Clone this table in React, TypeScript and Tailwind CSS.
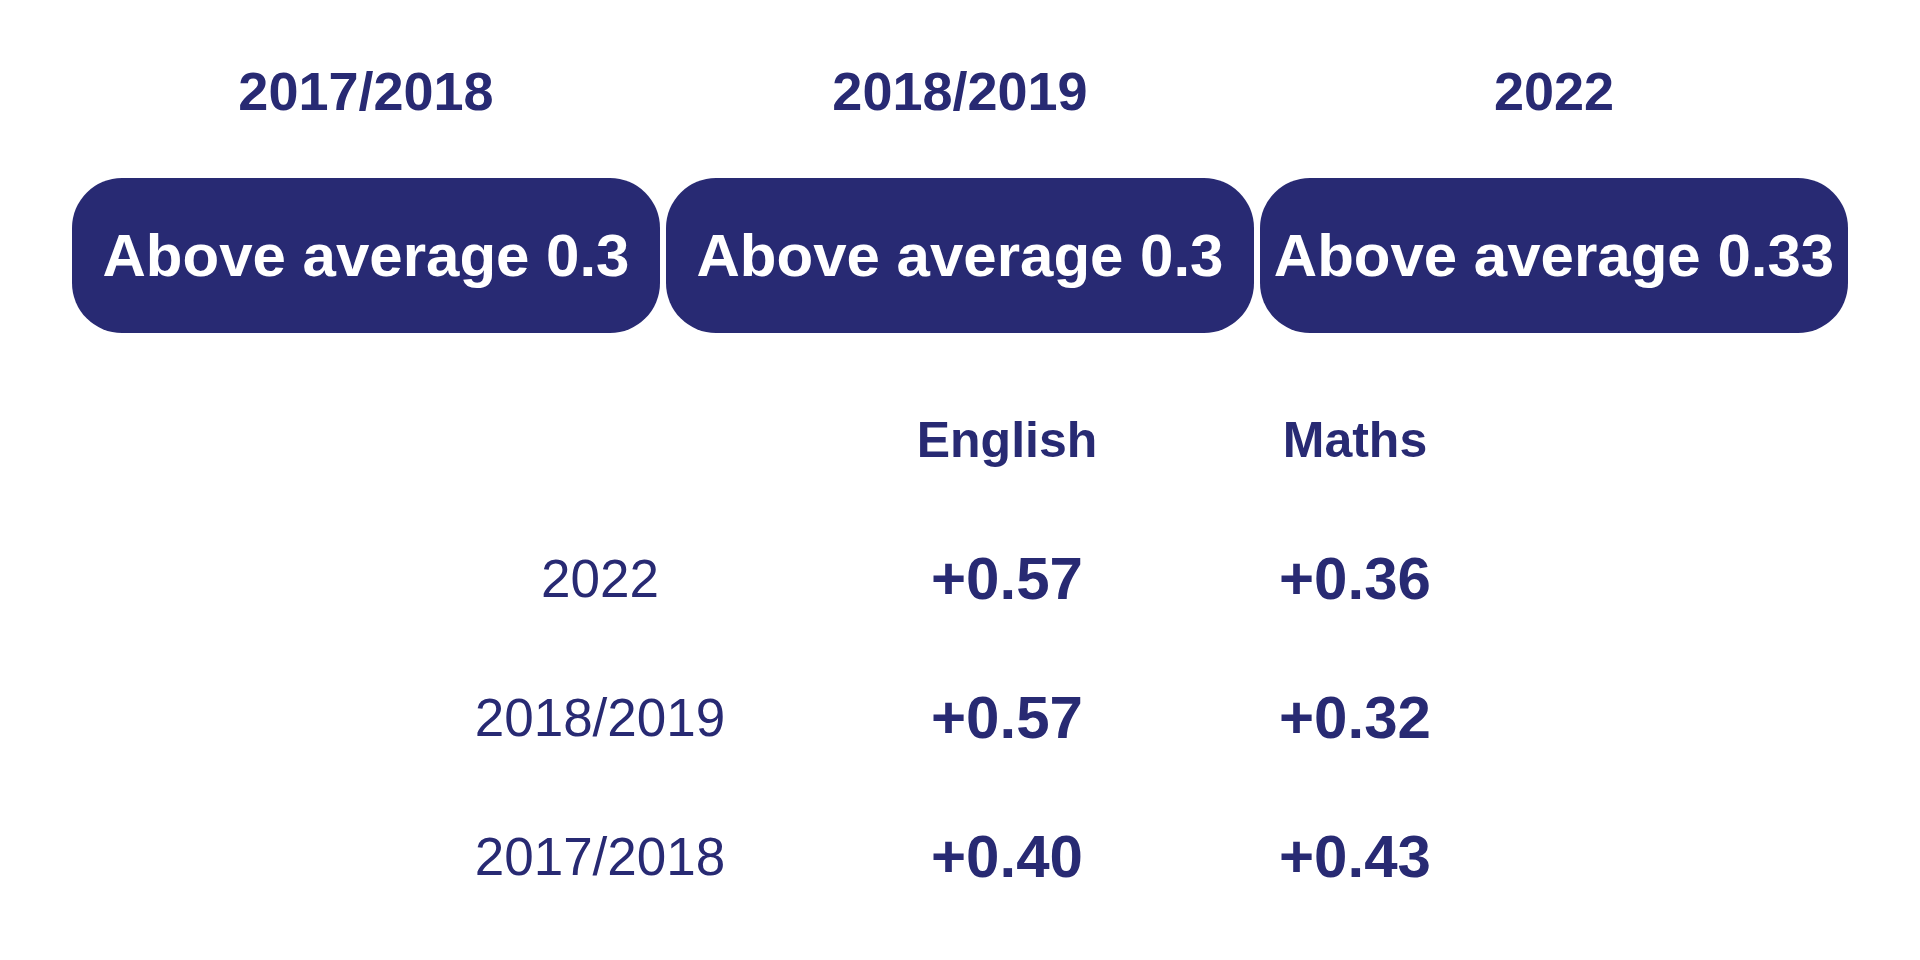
const years = ['2017/2018', '2018/2019', '2022'];
const scores = ['Above average 0.3', 'Above average 0.3', 'Above average 0.33'];

const rows = [
  { year: '2022', english: '+0.57', maths: '+0.36' },
  { year: '2018/2019', english: '+0.57', maths: '+0.32' },
  { year: '2017/2018', english: '+0.40', maths: '+0.43' },
];

export default function App() {
  return (
    <div
      className="w-full h-[960px] bg-white text-[#282a73] overflow-hidden"
      style={{ fontFamily: '"Liberation Sans", Arial, sans-serif' }}
    >
      {/* progress headline */}
      <div className="pt-[64px] px-[72px]">
        <div className="grid grid-cols-3 gap-[6px]">
          {years.map((y) => (
            <div key={y} className="h-[54px] flex items-center justify-center text-[54px] leading-none font-bold">
              {y}
            </div>
          ))}
        </div>
        <div className="mt-[60px] grid grid-cols-3 gap-[6px]">
          {scores.map((s, i) => (
            <div
              key={i}
              className="h-[155px] rounded-[50px] bg-[#282a73] flex items-center justify-center text-white text-[60px] leading-none font-bold whitespace-nowrap"
            >
              {s}
            </div>
          ))}
        </div>
      </div>

      {/* subject breakdown */}
      <div className="mt-[37px] pl-[450px] grid grid-cols-[300px_514px_182px]">
        <div className="h-[139px]" />
        <div className="h-[139px] flex items-center justify-center text-[50px] leading-none font-bold">English</div>
        <div className="h-[139px] flex items-center justify-center text-[50px] leading-none font-bold">Maths</div>
        {rows.map((r) => (
          <div key={r.year} className="contents">
            <div className="h-[139px] flex items-center justify-center text-[53px] leading-none font-normal">
              {r.year}
            </div>
            <div className="h-[139px] flex items-center justify-center text-[60px] leading-none font-bold">
              {r.english}
            </div>
            <div className="h-[139px] flex items-center justify-center text-[60px] leading-none font-bold">
              {r.maths}
            </div>
          </div>
        ))}
      </div>
    </div>
  );
}
